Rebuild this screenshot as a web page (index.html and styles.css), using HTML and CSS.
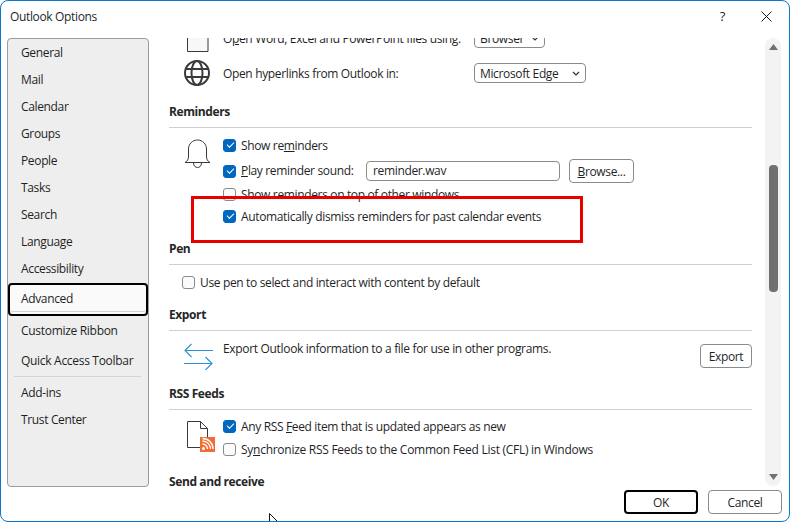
FILE: index.html
```html
<!DOCTYPE html>
<html lang="en">
<head>
<meta charset="utf-8">
<title>Outlook Options</title>
<link rel="stylesheet" href="styles.css">
</head>
<body>
<div class="window">
  <header class="titlebar">
    <span class="title">Outlook Options</span>
    <span class="help">?</span>
    <svg class="close" width="11" height="11" viewBox="0 0 11 11"><path d="M.5.5l10 10M10.5.5l-10 10" fill="none" stroke="#1a1a1a" stroke-width="1"/></svg>
  </header>
  <div class="main">
    <nav class="sidebar">
      <div class="nav-item">General</div>
      <div class="nav-item">Mail</div>
      <div class="nav-item">Calendar</div>
      <div class="nav-item">Groups</div>
      <div class="nav-item">People</div>
      <div class="nav-item">Tasks</div>
      <div class="nav-item">Search</div>
      <div class="nav-item">Language</div>
      <div class="nav-item">Accessibility</div>
      <div class="nav-item nav-active">Advanced</div>
      <div class="nav-item nav-tall">Customize Ribbon</div>
      <div class="nav-item nav-tall">Quick Access Toolbar</div>
      <div class="nav-sep"></div>
      <div class="nav-item">Add-ins</div>
      <div class="nav-item">Trust Center</div>
    </nav>
    <section class="content">
      <div class="top-row first">
        <div class="top-icon">
          <svg width="22" height="24" viewBox="0 0 22 24"><path d="M.5 0v23.500h20.500V0" fill="#f8f8f8" stroke="#3a3a3a"/></svg>
        </div>
        <div class="top-label">O<u>p</u>en Word, Excel and PowerPoint files using:</div>
        <div class="select select-browser">Browser<svg class="chev" width="8" height="5" viewBox="0 0 8 5"><path d="M1 1l3 3 3-3" fill="none" stroke="#333" stroke-width="1.200"/></svg></div>
      </div>
      <div class="top-row second">
        <div class="top-icon globe">
          <svg width="26" height="26" viewBox="0 0 26 26" fill="none" stroke="#3b3b3b" stroke-width="2"><circle cx="13" cy="13" r="12"/><ellipse cx="13" cy="13" rx="5.500" ry="12"/><path d="M2 9h22M2 17h22"/></svg>
        </div>
        <div class="top-label">Open hyperlinks from Outlook in:</div>
        <div class="select select-edge">Microsoft Edge<svg class="chev" width="8" height="5" viewBox="0 0 8 5"><path d="M1 1l3 3 3-3" fill="none" stroke="#333" stroke-width="1.200"/></svg></div>
      </div>

      <div class="group group-reminders">
        <h2 class="heading">Reminders</h2>
        <div class="group-body">
          <div class="group-icon bell">
            <svg width="27" height="30" viewBox="0 0 27 30" fill="none" stroke="#3a3a3a"><path d="M1 23.500c2.500-1.500 3.500-3 3.500-6.500V10c0-5 4-9 9-9s9 4 9 9v7c0 3.500 1 5 3.500 6.500z" stroke-linejoin="round"/><path d="M9.500 24c0 6 8 6 8 0"/></svg>
          </div>
          <div class="rows">
            <label class="row row-a"><input class="cb" type="checkbox" checked><span>Show re<u>m</u>inders</span></label>
            <div class="row row-b">
              <label class="sound"><input class="cb" type="checkbox" checked><span><u>P</u>lay reminder sound:</span></label>
              <div class="field">reminder.wav</div>
              <button class="btn btn-browse"><u>B</u>rowse...</button>
            </div>
            <label class="row row-c"><input class="cb" type="checkbox"><span>Show reminders on top of other windows</span></label>
            <label class="row row-d"><input class="cb" type="checkbox" checked><span>Automatically dismiss reminders for past calendar events</span></label>
          </div>
        </div>
      </div>

      <div class="group group-pen">
        <h2 class="heading">Pen</h2>
        <label class="row pen-row"><input class="cb" type="checkbox"><span>Use pen to select and interact with content by default</span></label>
      </div>

      <div class="group group-export">
        <h2 class="heading">Export</h2>
        <div class="group-body export-body">
          <div class="group-icon arrows">
            <svg width="29" height="27" viewBox="0 0 29 27" fill="none" stroke="#2b8fd6" stroke-width="1.100"><path d="M29 7.500H1M7.500 1L1 7.500 7.500 14M0 20.500h28M21.500 14l6.500 6.500-6.500 6.500"/></svg>
          </div>
          <div class="export-text">Export Outlook information to a file for use in other programs.</div>
          <button class="btn btn-export">Export</button>
        </div>
      </div>

      <div class="group group-rss">
        <h2 class="heading">RSS Feeds</h2>
        <div class="group-body">
          <div class="group-icon rss">
            <svg width="28" height="31" viewBox="0 0 28 31"><path d="M.5.500h13l7 7v19H.500z" fill="#fff" stroke="#3a3a3a"/><path d="M13.500.5v7h7" fill="none" stroke="#3a3a3a"/><rect x="13" y="16" width="15" height="15" fill="#f26d34"/><circle cx="16.500" cy="27.500" r="1.500" fill="#fff"/><path d="M15.500 23a5 5 0 015 5M15.500 20a8 8 0 018 8M15.500 17.500a10.500 10.500 0 0110.500 10.500" fill="none" stroke="#fff" stroke-width="1.300"/></svg>
          </div>
          <div class="rows">
            <label class="row row-rss1"><input class="cb" type="checkbox" checked><span>Any RSS <u>F</u>eed item that is updated appears as new</span></label>
            <label class="row row-rss2"><input class="cb" type="checkbox"><span>Sy<u>n</u>chronize RSS Feeds to the Common Feed List (CFL) in Windows</span></label>
          </div>
        </div>
      </div>

      <div class="group">
        <h2 class="heading">Send and receive</h2>
      </div>
    </section>
    <aside class="scrollbar">
      <svg class="arrow-up" width="9" height="6" viewBox="0 0 9 6"><path d="M0 6l4.500-6L9 6z" fill="#707070"/></svg>
      <div class="thumb"></div>
      <svg class="arrow-down" width="9" height="6" viewBox="0 0 9 6"><path d="M0 0l4.500 6L9 0z" fill="#707070"/></svg>
    </aside>
  </div>
  <footer class="footer">
    <button class="btn btn-foot btn-default">OK</button>
    <button class="btn btn-foot">Cancel</button>
  </footer>
  <div class="annotation"></div>
  <svg class="cursor" width="12" height="10" viewBox="0 0 12 10"><path d="M.5.500L10 10H.500z" fill="#fff" stroke="#111"/></svg>
</div>
</body>
</html>
```
FILE: styles.css
```css
* { box-sizing: border-box; }
html, body { margin: 0; padding: 0; }
body {
  width: 790px;
  height: 522px;
  overflow: hidden;
  background: #fff;
  font-family: "Open Sans", "Noto Sans", sans-serif;
  font-size: 12px;
  letter-spacing: -0.35px;
  color: #1f1f1f;
}
.window {
  position: relative;
  width: 790px;
  height: 522px;
  background: #fff;
  border: 1px solid #0b78c9;
  border-radius: 8px;
  display: flex;
  flex-direction: column;
  overflow: hidden;
}
.titlebar {
  height: 37px;
  flex: none;
  display: flex;
  align-items: center;
  padding: 0 17px 7px 9px;
}
.title { flex: 1; font-size: 12px; }
.help { margin-right: 36px; font-size: 13px; }
.main { flex: none; height: 452px; display: flex; align-items: flex-start; }
.sidebar {
  flex: none;
  width: 142px;
  height: 449px;
  margin-left: 6px;
  border: 1px solid #9c9c9c;
  border-radius: 4px;
  background: #eeeeee;
  padding: 0;
  padding-top: 1px;
}
.nav-item {
  height: 27px;
  padding-left: 13px;
  line-height: 26px;
}
.nav-active {
  height: 33px;
  line-height: 27px;
  background: #fafafa;
  border: 2px solid #000;
  border-radius: 4px;
  padding-left: 11px;
  box-shadow: inset 0 -2px 0 #fafafa, inset 0 -3px 0 #d4d4d4;
}
.nav-tall { height: 30px; line-height: 30px; letter-spacing: -0.3px; }
.nav-sep { height: 1px; margin: 0 7px 3px 6px; background: #d4d4d4; }
.content {
  flex: none;
  width: 583px;
  height: 452px;
  margin-left: 20px;
  overflow: hidden;
}
.top-row { display: flex; align-items: center; height: 20px; }
.first { margin-top: -10px; }
.second { margin-top: 15px; }
.top-icon { width: 54px; flex: none; padding-left: 18px; height: 20px; display: flex; align-items: center; }
.first .top-icon { align-items: flex-start; height: 24px; margin-top: 4px; }
.globe { padding-left: 15px; }
.top-label { width: 251px; flex: none; }
.select {
  height: 20px;
  border: 1px solid #8a8a8a;
  border-radius: 4px;
  padding: 0 5px;
  display: flex;
  align-items: center;
  justify-content: space-between;
}
.select-browser { width: 71px; }
.select-edge { width: 112px; }
.chev { flex: none; }
.group-reminders { margin-top: 20px; height: 137px; }
.group-pen { height: 66px; }
.group-export { height: 79px; }
.group-rss { height: 88px; }
.heading {
  margin: 0;
  height: 25px;
  padding-top: 1px;
  font-size: 12px;
  font-weight: 700;
  letter-spacing: -0.4px;
  color: #262626;
  line-height: 16px;
  border-bottom: 1px solid #cfcfcf;
}
.group-body { display: flex; }
.group-icon { width: 54px; flex: none; }
.bell { padding: 11px 0 0 15px; }
.arrows { padding: 12px 0 0 15px; }
.rss { padding: 11px 0 0 18px; }
.rows { flex: 1; display: flex; flex-direction: column; }
.row { display: flex; align-items: center; height: 20px; }
.row-a { margin-top: 7px; }
.row-b { margin-top: 4px; height: 24px; }
.row-c { margin-top: 1px; }
.row-d { margin-top: 2px; }
.sound { width: 143px; flex: none; display: flex; align-items: center; }
.sound span { margin-top: -2px; }
.field {
  width: 194px;
  height: 20px;
  border: 1px solid #8a8a8a;
  border-radius: 4px;
  padding-left: 6px;
  line-height: 18px;
  margin-right: 9px;
}
.cb {
  appearance: none;
  -webkit-appearance: none;
  flex: none;
  width: 13px;
  height: 13px;
  margin: 0 5px 0 0;
  border: 1px solid #8a8a8a;
  border-radius: 3px;
  background: #fbfbfb;
  position: relative;
}
.cb:checked { background: #0067c0; border-color: #0067c0; }
.cb:checked::after {
  content: "";
  position: absolute;
  left: 3px;
  top: 2px;
  width: 6px;
  height: 3px;
  border-left: 1.500px solid #fff;
  border-bottom: 1.500px solid #fff;
  transform: rotate(-45deg);
}
.btn {
  font: inherit;
  letter-spacing: inherit;
  color: inherit;
  background: #fff;
  border: 1px solid #8a8a8a;
  border-radius: 4px;
  padding: 0;
  height: 24px;
}
.btn-browse { width: 65px; }
.pen-row { margin: 7px 0 0 13px; }
.export-body { align-items: flex-start; }
.export-text { width: 477px; flex: none; margin-top: 8px; line-height: 20px; letter-spacing: -0.32px; }
.btn-export { width: 52px; margin-top: 13px; }
.row-rss1 { margin-top: 6px; }
.row-rss2 { margin-top: 3px; letter-spacing: -0.27px; }
.scrollbar {
  flex: none;
  width: 16px;
  height: 448px;
  margin-left: 13px;
  background: #f3f3f3;
  border-radius: 8px;
  display: flex;
  flex-direction: column;
  align-items: center;
  padding-top: 6px;
}
.arrow-down { margin-top: 182px; }
.thumb { width: 9px; height: 127px; margin-top: 115px; background: #707070; border-radius: 4px; }
.footer {
  flex: none;
  height: 32px;
  display: flex;
  justify-content: flex-end;
  gap: 10px;
  padding-right: 7px;
}
.btn-foot { width: 74px; height: 24px; }
.btn-default { border: 2px solid #000; }
.annotation {
  position: absolute;
  left: 190px;
  top: 195px;
  width: 392px;
  height: 47px;
  border: 3px solid #e60000;
}
.cursor { position: absolute; left: 268px; top: 512px; }
```
